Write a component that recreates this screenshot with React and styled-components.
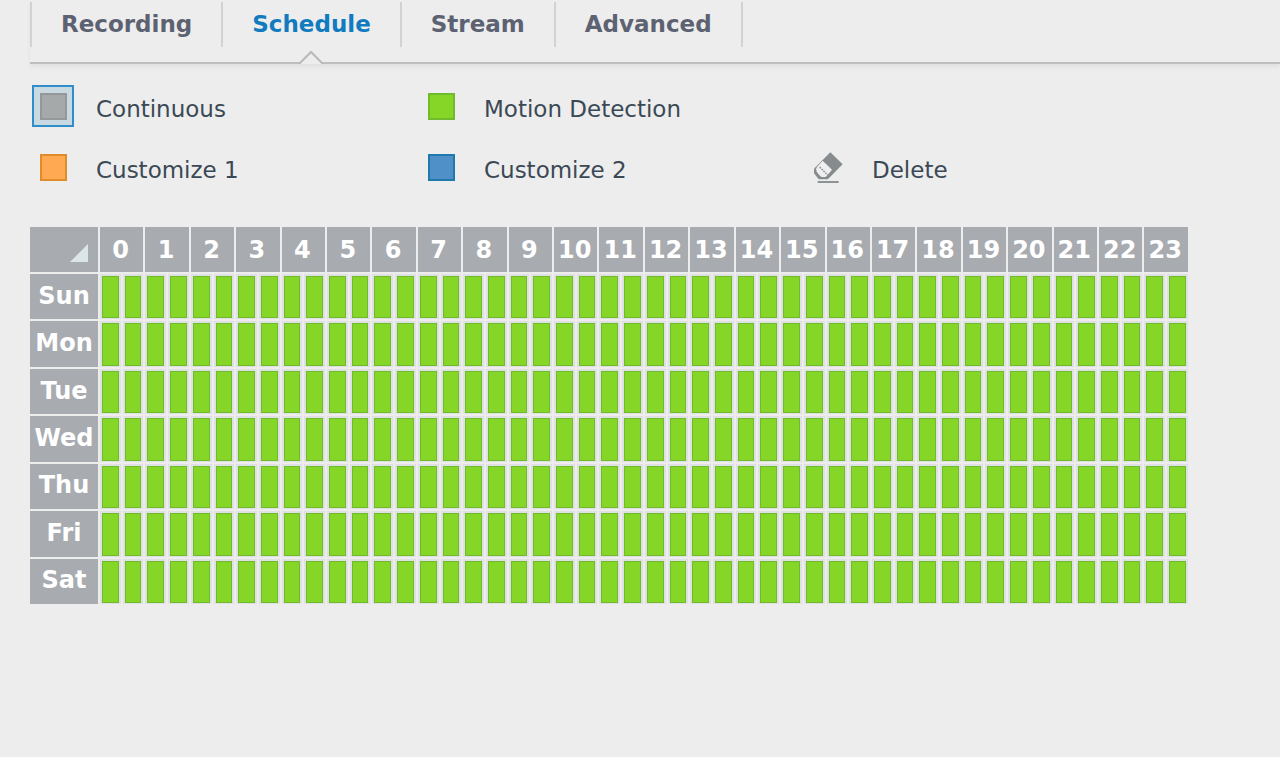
import React from 'react';
import styled, { createGlobalStyle, css } from 'styled-components';

const TABS = ['Recording', 'Schedule', 'Stream', 'Advanced'];
const DAYS = ['Sun', 'Mon', 'Tue', 'Wed', 'Thu', 'Fri', 'Sat'];
const HOURS = Array.from({ length: 24 }, (_, i) => i);
const HALF_HOURS = Array.from({ length: 48 }, (_, i) => i);

const MODES = [
    { id: 'continuous', label: 'Continuous', fill: '#a5a9aa', edge: '#94989a' },
    { id: 'motion', label: 'Motion Detection', fill: '#86d628', edge: '#6fbb2c' },
    { id: 'custom1', label: 'Customize 1', fill: '#ffa952', edge: '#e08c2a' },
    { id: 'custom2', label: 'Customize 2', fill: '#4f90c9', edge: '#2079aa' },
    { id: 'delete', label: 'Delete' }
];

const Eraser = () => (
    <svg width='30' height='32' viewBox='3 -4 90 96' aria-hidden='true'>
        <path d='M52 0 L89 36 L46 79 Q44 81 40 81 L21 81 Q18 81 16 79 L4 64 Q0 55 5 47 Z' fill='#868c8e' />
        <path d='M29 25 L12 44 Q6 51 11 58 L22 72 Q24 74 27 74 L36 74 Q39 74 41 71 L57 52 Z' fill='#efefef' />
        <path d='M20 44 L44 68' stroke='#868c8e' strokeWidth='4' strokeDasharray='5 3' />
        <rect x='14' y='86' width='63' height='6' fill='#8d9395' />
    </svg>
);

const App = () => {
    const [tab, setTab] = React.useState('Schedule');
    const [mode, setMode] = React.useState('continuous');
    const [schedule, setSchedule] = React.useState(DAYS.map(() => HALF_HOURS.map(() => 'motion')));

    // paint every cell for which match(day, slot) is true
    const paint = (match) => {
        setSchedule(schedule.map((row, day) => row.map((cell, slot) => (match(day, slot) ? mode : cell))));
    };

    const renderLegend = () => {
        return MODES.map(({ id, label, fill, edge }) => (
            <Mode key={id}>
                <input type='radio' name='mode' value={id} checked={mode === id} onChange={() => setMode(id)} />
                <ModeBox>
                    {fill ? <Swatch $fill={fill} $edge={edge} /> : <Eraser />}
                </ModeBox>
                <ModeLabel>{label}</ModeLabel>
            </Mode>
        ));
    };

    return (
        <>
            <GlobalStyle />
            <Tabs>
                {TABS.map((name) => (
                    <Tab key={name} type='button' $active={tab === name} onClick={() => setTab(name)}>
                        {name}
                        {tab === name && (
                            <Notch width='24' height='14' viewBox='0 0 24 14' aria-hidden='true'>
                                <path d='M0 14 V12 L12 1 L24 12 V14 Z' fill='#ededed' />
                                <path d='M0 13 L1 13 L12 2 L23 13 L24 13' fill='none' stroke='#b9b9b9' strokeWidth='2' />
                            </Notch>
                        )}
                    </Tab>
                ))}
            </Tabs>
            <Content>
                <Legend>{renderLegend()}</Legend>
                <Table>
                    <colgroup>
                        <DayCol />
                        {HALF_HOURS.map((slot) => <col key={slot} />)}
                    </colgroup>
                    <thead>
                        <tr>
                            <CornerCell>
                                <SelectAll type='button' aria-label='Select all' onClick={() => paint(() => true)} />
                            </CornerCell>
                            {HOURS.map((hour) => (
                                <HourCell
                                    key={hour}
                                    colSpan={2}
                                    scope='col'
                                    onClick={() => paint((day, slot) => Math.floor(slot / 2) === hour)}
                                >
                                    {hour}
                                </HourCell>
                            ))}
                        </tr>
                    </thead>
                    <tbody>
                        {DAYS.map((name, day) => (
                            <tr key={name}>
                                <DayCell scope='row' onClick={() => paint((d) => d === day)}>{name}</DayCell>
                                {schedule[day].map((value, slot) => {
                                    const { fill, edge } = MODES.find((m) => m.id === value);
                                    return (
                                        <Slot
                                            key={slot}
                                            $fill={fill}
                                            $edge={edge}
                                            onClick={() => paint((d, s) => d === day && s === slot)}
                                        />
                                    );
                                })}
                            </tr>
                        ))}
                    </tbody>
                </Table>
            </Content>
        </>
    );
};

const GlobalStyle = createGlobalStyle`
    body {
        margin: 0;
        background: #ededed;
        color: #3b4955;
        font-family: Verdana, 'DejaVu Sans', sans-serif;
        font-size: 23px;
    }
    * {
        box-sizing: border-box;
    }
`;

const Tabs = styled.nav`
    display: flex;
    margin-left: 30px;
    padding: 2px 0 15px;
    border-bottom: 2px solid #bebebe;
    box-shadow: 0 3px 4px rgba(0, 0, 0, 0.05);
`;

const Tab = styled.button`
    position: relative;
    height: 45px;
    padding: 0 29px 2px;
    border: 0;
    border-right: 2px solid #d2d2d2;
    background: none;
    color: ${({ $active }) => ($active ? '#117bbf' : '#5c6271')};
    font: inherit;
    font-weight: bold;
    cursor: pointer;
    &:first-child {
        border-left: 2px solid #d2d2d2;
    }
`;

const Notch = styled.svg`
    position: absolute;
    top: 48px;
    left: calc(50% - 13px);
`;

const Content = styled.main`
    padding: 21px 0 0 28px;
`;

const Legend = styled.div`
    display: grid;
    grid-template-columns: repeat(3, minmax(0, 388px));
    row-gap: 19px;
    margin: 0 0 37px 4px;
`;

const ModeBox = styled.span`
    display: flex;
    align-items: center;
    justify-content: center;
    width: 42px;
    height: 42px;
    border: 2px solid transparent;
    input:checked + & {
        border-color: #2f8dc9;
        background: #c8d9e1;
    }
`;

const Mode = styled.label`
    display: flex;
    gap: 22px;
    cursor: pointer;
    &:nth-child(3) {
        grid-column-start: 1;
    }
    input {
        position: absolute;
        opacity: 0;
    }
`;

const Swatch = styled.span`
    width: 27px;
    height: 27px;
    border: 2px solid ${({ $edge }) => $edge};
    background: ${({ $fill }) => $fill};
`;

const ModeLabel = styled.span`
    padding-top: 6px;
    line-height: 36px;
    white-space: nowrap;
`;

const Table = styled.table`
    width: calc(100% - 90px);
    height: 381px;
    table-layout: fixed;
    border-spacing: 2px;
`;

const DayCol = styled.col`
    width: 68px;
`;

const headStyle = css`
    background: #a8abb0;
    color: #fff;
    font-size: 24px;
    font-weight: bold;
    line-height: 28px;
    cursor: pointer;
`;

const HourCell = styled.th`
    ${headStyle}
    padding: 0 2px 0 0;
    text-align: center;
`;

const DayCell = styled.th`
    ${headStyle}
    padding: 0 0 2px;
    text-align: center;
`;

const CornerCell = styled.td`
    ${headStyle}
    height: 45px;
    padding: 0 10px 10px;
    vertical-align: bottom;
`;

const SelectAll = styled.button`
    display: block;
    width: 18px;
    height: 18px;
    margin-left: auto;
    padding: 0;
    border: 0;
    background: #dbe6ea;
    clip-path: polygon(100% 0, 100% 100%, 0 100%);
    cursor: pointer;
`;

const Slot = styled.td`
    padding: 0;
    border: 2px solid #dfe0e2;
    border-bottom-width: 1px;
    background: ${({ $fill }) => $fill || '#fff'};
    box-shadow: inset 0 0 0 1px ${({ $edge }) => $edge || '#dfe0e2'};
    cursor: pointer;
`;

export default App;
